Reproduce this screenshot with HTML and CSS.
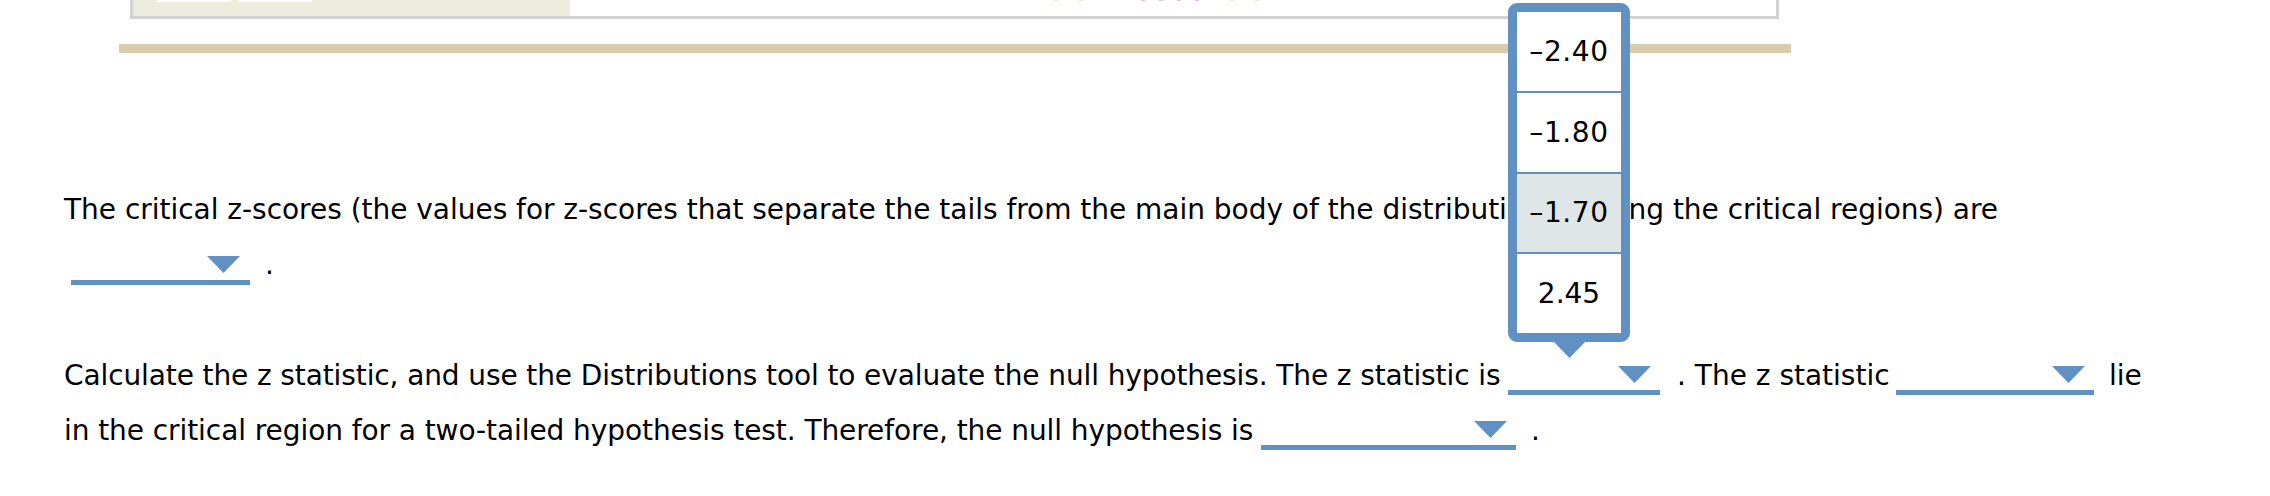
FILE: index.html
```html
<!DOCTYPE html>
<html lang="en">
<head>
<meta charset="utf-8">
<title>Hypothesis test</title>
<link rel="stylesheet" href="styles.css">
</head>
<body>
<section class="tool">
  <div class="tool-box">
    <div class="tool-side"><i class="field"></i><i class="field"></i></div>
    <div class="tool-chart">
      <div class="marks left"><i class="mark orange"></i><i class="mark orange"></i></div>
      <div class="marks center"><i class="mark purple"></i><i class="mark purple"></i><i class="mark purple"></i><i class="mark purple"></i></div>
      <div class="marks right"><i class="mark orange"></i><i class="mark orange"></i></div>
    </div>
  </div>
</section>
<main class="question">
  <div class="line"><span class="l1">The critical z-scores (the values for z-scores that separate the tails from the main body of the distribution defining the critical regions) are</span></div>
  <div class="line second"><span class="select s1"><svg class="arrow" viewBox="0 0 33 17"><path d="M0 0H33L16.5 17Z"/></svg></span><span class="dot">.</span></div>
  <div class="line third"><span class="l2">Calculate the z statistic, and use the Distributions tool to evaluate the null hypothesis. The z statistic is</span><span class="select s2"><svg class="arrow" viewBox="0 0 33 17"><path d="M0 0H33L16.5 17Z"/></svg>
    <span class="menu"><span class="option">–2.40</span><span class="option">–1.80</span><span class="option active">–1.70</span><span class="option last">2.45</span><svg class="arrow pointer" viewBox="0 0 33 17"><path d="M0 0H33L16.5 17Z"/></svg></span></span><span class="l3">. The z statistic</span><span class="select s3"><svg class="arrow" viewBox="0 0 33 17"><path d="M0 0H33L16.5 17Z"/></svg></span><span class="l4">lie</span></div>
  <div class="line fourth"><span class="l5">in the critical region for a two-tailed hypothesis test. Therefore, the null hypothesis is</span><span class="select s4"><svg class="arrow" viewBox="0 0 33 17"><path d="M0 0H33L16.5 17Z"/></svg></span><span class="dot">.</span></div>
</main>
</body>
</html>
```
FILE: styles.css
```css
* { box-sizing: border-box; }
body { margin: 0; width: 2270px; height: 496px; overflow: hidden; background: #fff; color: #000; font: 28px "DejaVu Sans", Verdana, sans-serif; }
.tool { width: 1672px; height: 53px; margin-left: 119px; border-bottom: 9px solid #d8cdaa; }
.tool-box { display: flex; width: 1649px; height: 19px; margin-left: 11px; border: 3px solid #d2d2d2; border-top: 0; }
.tool-side { display: flex; gap: 7px; width: 437px; height: 16px; padding-left: 24px; background: #ebecdc; }
.field { width: 74px; height: 2px; background: #fff; }
.tool-chart { display: flex; padding-left: 484px; }
.marks { display: flex; }
.left { gap: 21px; }
.center { gap: 14px; margin-left: 58px; }
.right { gap: 21px; margin-left: 31px; }
.mark { width: 4px; height: 1px; }
.orange { background: #fae0c4; }
.purple { background: #dfc2e2; }
.question { padding: 129px 0 0 64px; }
.line { display: flex; height: 55px; line-height: 55px; white-space: pre; }
.third { margin-top: 56px; }
.select { position: relative; flex: none; height: 48px; border-bottom: 5px solid #6191c2; display: flex; justify-content: flex-end; padding: 19px 9px 0 0; }
.third .select, .fourth .select { height: 47px; padding-top: 18px; }
.arrow { display: block; width: 33px; height: 17px; fill: #6191c2; }
.l1, .l2, .l3, .l4, .l5 { flex: none; }
.s1 { width: 179px; margin-left: 7px; padding-right: 10px; }
.s2 { width: 152px; }
.s3 { width: 198px; }
.s4 { width: 255px; }
.l1 { letter-spacing: -0.025px; }
.l2 { width: 1444px; letter-spacing: -0.11px; }
.l3 { width: 219px; margin-left: 17px; }
.l4 { margin-left: 15px; }
.l5 { width: 1197px; letter-spacing: -0.075px; }
.dot { margin-left: 15px; }
.menu { position: absolute; left: 0; bottom: 48px; width: 122px; height: 339px; border: 9px solid #6191c2; border-radius: 9px; background: #fff; display: flex; flex-direction: column; }
.option { flex: 1; display: flex; align-items: center; justify-content: center; line-height: 33px; border-top: 2px solid #6191c2; letter-spacing: 0.6px; }
.option:first-child { border-top: 0; }
.last { letter-spacing: 0; }
.active { background: #dfe6e7; }
.pointer { position: absolute; left: 36px; top: 329px; }
```
